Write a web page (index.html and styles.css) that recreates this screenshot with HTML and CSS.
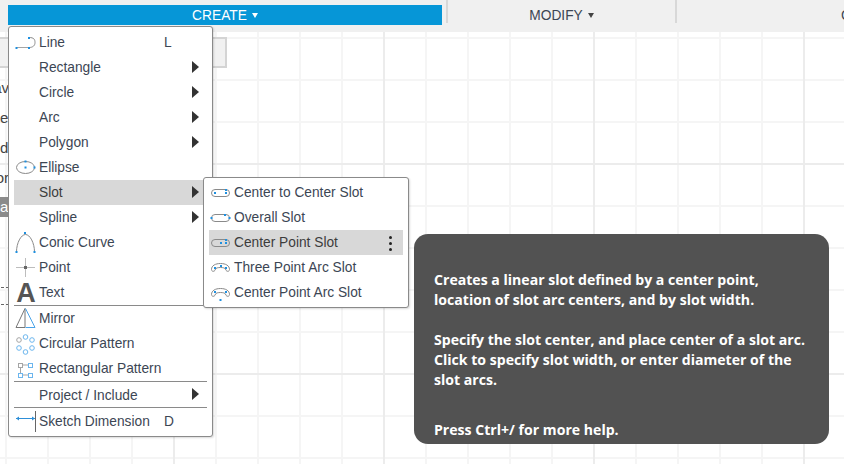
FILE: index.html
```html
<!DOCTYPE html>
<html lang="en">
<head>
<meta charset="utf-8">
<title>Sketch create menu</title>
<link rel="stylesheet" href="styles.css">
</head>
<body>
<svg class="defs" width="0" height="0" aria-hidden="true">
  <defs>
    <g id="slot"><rect x="1.500" y="3.500" width="18" height="7" rx="3.500" fill="#fff" stroke="#8a8a8a"/></g>
    <g id="arcslot"><path d="M1.500 8.500c0-4 4-6 9-6s9 2 9 6c0 2.500-3.500 2.500-4-.5-.4-1-2.500-1.500-5-1.500s-4.600.5-5 1.500c-.5 3-4 3-4 .5z" fill="#fff" stroke="#8a8a8a"/></g>
  </defs>
</svg>
<header class="toolbar">
  <div class="tab tab-active">CREATE<span class="caret"></span></div>
  <div class="tab tab-modify">MODIFY<span class="caret caret-dark"></span></div>
  <div class="tab tab-rest">C</div>
</header>
<main class="canvas">
  <div class="side-head"></div>
  <ul class="side-list">
    <li>av</li>
    <li>e</li>
    <li>d</li>
    <li>or</li>
    <li class="side-dark">a</li>
    <li class="side-box"><span class="box-mark"></span></li>
  </ul>
</main>

<nav class="menu main-menu">
  <div class="row">
    <svg class="ico" viewBox="0 0 22 18"><path d="M1 13.500h13" stroke="#a5a5a5" fill="none"/><path d="M14 3.500c5 0 6 2 6 5s-2 5-6 5" stroke="#8a8a8a" fill="none"/><rect x="0.500" y="13" width="2" height="2" fill="#1e90e0"/><rect x="13" y="13" width="2" height="2" fill="#1e90e0"/><rect x="13" y="3" width="2" height="2" fill="#1e90e0"/></svg>
    <span class="label">Line</span><span class="key">L</span>
  </div>
  <div class="row"><span class="ico"></span><span class="label">Rectangle</span><span class="arrow"></span></div>
  <div class="row"><span class="ico"></span><span class="label">Circle</span><span class="arrow"></span></div>
  <div class="row"><span class="ico"></span><span class="label">Arc</span><span class="arrow"></span></div>
  <div class="row"><span class="ico"></span><span class="label">Polygon</span><span class="arrow"></span></div>
  <div class="row">
    <svg class="ico" viewBox="0 0 22 18"><ellipse cx="10.500" cy="8.500" rx="9" ry="6" fill="none" stroke="#8a8a8a"/><rect x="9.500" y="7.500" width="2" height="2" fill="#1e90e0"/><rect x="9.500" y="1.500" width="2" height="2" fill="#1e90e0"/><rect x="18.500" y="7.500" width="2" height="2" fill="#1e90e0"/></svg>
    <span class="label">Ellipse</span>
  </div>
  <div class="row row-on"><span class="ico"></span><span class="label">Slot</span><span class="arrow"></span></div>
  <div class="row"><span class="ico"></span><span class="label">Spline</span><span class="arrow"></span></div>
  <div class="row">
    <svg class="ico ico-tall" viewBox="0 0 22 24"><path d="M1.500 21C1.500 12 6 3.500 10.500 3.500S19.500 12 19.500 21" fill="none" stroke="#8a8a8a"/><rect x="0.500" y="20" width="2" height="2" fill="#1e90e0"/><rect x="18.500" y="20" width="2" height="2" fill="#1e90e0"/><rect x="9" y="1" width="2" height="2" fill="#1e90e0"/></svg>
    <span class="label">Conic Curve</span>
  </div>
  <div class="row">
    <svg class="ico ico-tall" viewBox="0 0 22 24"><path d="M1 11.500h19M10.500 2v19" stroke="#bdbdbd" fill="none"/><rect x="9" y="10" width="3" height="3" fill="#666"/></svg>
    <span class="label">Point</span>
  </div>
  <div class="row">
    <span class="ico glyph-a">A</span>
    <span class="label">Text</span>
  </div>
  <div class="rule"></div>
  <div class="row">
    <svg class="ico ico-tall" viewBox="0 0 22 24"><path d="M10 1.500 1 20.500h9z" fill="none" stroke="#777"/><path d="M10.500 1.500 20 20.500h-9.500" fill="none" stroke="#4aa3e8"/></svg>
    <span class="label">Mirror</span>
  </div>
  <div class="row">
    <svg class="ico ico-tall" viewBox="0 0 22 24"><g fill="#fff" stroke="#6cb6ee"><circle cx="4" cy="8" r="2.300" stroke="#a5a5a5"/><circle cx="10.500" cy="5" r="2.300"/><circle cx="17" cy="8" r="2.300"/><circle cx="4" cy="16" r="2.300"/><circle cx="10.500" cy="20" r="2.300"/><circle cx="17" cy="16" r="2.300"/></g></svg>
    <span class="label">Circular Pattern</span>
  </div>
  <div class="row">
    <svg class="ico ico-tall" viewBox="0 0 22 24"><path d="M8 8h5M8 18h5M5.500 10v6" stroke="#a5a5a5" fill="none"/><g fill="#fff"><rect x="3.500" y="6.500" width="4" height="4" stroke="#a5a5a5"/><rect x="13.500" y="6.500" width="4" height="4" stroke="#6cb6ee"/><rect x="3.500" y="16.500" width="4" height="4" stroke="#6cb6ee"/><rect x="13.500" y="16.500" width="4" height="4" stroke="#6cb6ee"/></g></svg>
    <span class="label">Rectangular Pattern</span>
  </div>
  <div class="rule"></div>
  <div class="row row-low"><span class="ico"></span><span class="label">Project / Include</span><span class="arrow"></span></div>
  <div class="rule"></div>
  <div class="row row-low">
    <svg class="ico ico-tall" viewBox="0 0 22 24"><path d="M1 9.500h19" stroke="#2e8fd8" fill="none"/><path d="M1 9.500l3-2v4zM20 9.500l-3-2v4z" fill="#2e8fd8"/><path d="M20.500 2v21" stroke="#666" fill="none"/></svg>
    <span class="label">Sketch Dimension</span><span class="key">D</span>
  </div>
</nav>

<nav class="menu sub-menu">
  <div class="row">
    <svg class="ico" viewBox="0 -2 22 18"><use href="#slot"/><rect x="4" y="6" width="2" height="2" fill="#1e90e0"/><rect x="15" y="6" width="2" height="2" fill="#1e90e0"/><rect x="15" y="3" width="2" height="2" fill="#1e90e0"/></svg>
    <span class="label">Center to Center Slot</span>
  </div>
  <div class="row">
    <svg class="ico" viewBox="0 -2 22 18"><use href="#slot"/><rect x="0.500" y="6" width="2" height="2" fill="#1e90e0"/><rect x="14" y="3" width="2" height="2" fill="#1e90e0"/><rect x="18.500" y="6" width="2" height="2" fill="#1e90e0"/></svg>
    <span class="label">Overall Slot</span>
  </div>
  <div class="row row-on">
    <svg class="ico" viewBox="0 -2 22 18"><rect x="1.500" y="3.500" width="18" height="7" rx="3.500" fill="none" stroke="#8a8a8a"/><rect x="10" y="6" width="2" height="2" fill="#1e90e0"/><rect x="15" y="6" width="2" height="2" fill="#1e90e0"/><rect x="15" y="3" width="2" height="2" fill="#1e90e0"/></svg>
    <span class="label">Center Point Slot</span>
    <span class="dots"><i></i><i></i><i></i></span>
  </div>
  <div class="row">
    <svg class="ico" viewBox="0 -2 22 18"><use href="#arcslot"/><rect x="4" y="6" width="2" height="2" fill="#1e90e0"/><rect x="10" y="4" width="2" height="2" fill="#1e90e0"/><rect x="15" y="6" width="2" height="2" fill="#1e90e0"/></svg>
    <span class="label">Three Point Arc Slot</span>
  </div>
  <div class="row">
    <svg class="ico" viewBox="0 -2 22 18"><use href="#arcslot"/><rect x="4" y="5" width="2" height="2" fill="#1e90e0"/><rect x="15" y="5" width="2" height="2" fill="#1e90e0"/><rect x="9.500" y="13" width="2" height="2" fill="#1e90e0"/></svg>
    <span class="label">Center Point Arc Slot</span>
  </div>
</nav>

<aside class="tip">
  <p>Creates a linear slot defined by a center point,<br>location of slot arc centers, and by slot width.</p>
  <p>Specify the slot center, and place center of a slot arc.<br>Click to specify slot width, or enter diameter of the<br>slot arcs.</p>
  <p class="tip-last">Press Ctrl+/ for more help.</p>
</aside>
</body>
</html>
```
FILE: styles.css
```css
* { box-sizing: border-box; }
html, body { margin: 0; height: 100%; overflow: hidden; }
body {
  width: 844px;
  height: 464px;
  position: relative;
  background: #fff;
  font-family: "Liberation Sans", Arial, sans-serif;
  font-size: 13.75px;
  color: #3c3c3c;
}
.defs { position: absolute; }

.toolbar {
  display: flex;
  height: 32px;
  padding: 5px 0 0 8px;
  background: #f0f0f0;
}
.tab {
  flex: none;
  height: 20px;
  line-height: 21px;
  text-align: center;
  color: #3c4654;
}
.tab-active { width: 434px; background: #0696d7; color: #fff; margin-right: 4px; }
.tab-modify {
  width: 231px;
  height: 23px;
  margin-top: -5px;
  padding-top: 5px;
  border-left: 2px solid #d8d8d8;
  border-right: 2px solid #d8d8d8;
}
.tab-rest { flex: 1; text-align: left; padding-left: 164px; overflow: hidden; }
.caret {
  display: inline-block;
  margin-left: 5px;
  vertical-align: 2px;
  border-left: 3px solid transparent;
  border-right: 3px solid transparent;
  border-top: 5px solid #fff;
}
.caret-dark { border-top-color: #444; }

.canvas {
  height: 432px;
  padding-top: 5px;
  background-color: #fff;
  background-image:
    linear-gradient(90deg, #ececec 2px, transparent 2px),
    linear-gradient(#ececec 2px, transparent 2px),
    linear-gradient(90deg, #f5f5f5 2px, transparent 2px),
    linear-gradient(#f5f5f5 2px, transparent 2px);
  background-size: 210px 210px, 210px 210px, 42px 42px, 42px 42px;
  background-position: 593px 131px, 593px 131px, 467px 5px, 467px 5px;
}
.side-head {
  width: 227px;
  height: 31px;
  background: #f1f1f1;
  border-top: 2px solid #d4d4d4;
  border-right: 2px solid #d4d4d4;
  border-bottom: 2px solid #d4d4d4;
}
.side-list {
  list-style: none;
  margin: 9px 0 0;
  padding: 0;
  width: 9px;
  font-size: 15px;
  color: #444;
}
.side-list li {
  height: 30px;
  line-height: 22px;
  white-space: nowrap;
  direction: rtl;
  text-align: left;
}
.side-list .side-dark {
  height: 20px;
  line-height: 20px;
  background: #8b8b8b;
  color: #fff;
}
.side-list .side-box { height: 18px; margin-top: 70px; }
.box-mark {
  display: block;
  width: 8px;
  height: 18px;
  border: 1px dashed #666;
  border-left: 0;
}

.menu {
  position: absolute;
  background: #fff;
  border: 1px solid #8a8a8a;
  border-radius: 3px;
  box-shadow: 1px 1px 2px rgba(0,0,0,.15);
}
.main-menu { left: 8px; top: 26px; width: 205px; height: 411px; padding: 3px 5px 0; }
.sub-menu { left: 203px; top: 177px; width: 206px; height: 131px; padding: 2px 5px 0; }

.row {
  display: flex;
  align-items: center;
  height: 25px;
  position: relative;
}
.row-on { background: #d8d8d8; }
.main-menu .row-on { margin-right: -5px; }
.ico {
  flex: none;
  display: block;
  width: 22px;
  height: 18px;
  margin: 0 2px 0 1px;
}
.ico-tall { height: 24px; }
.label { white-space: nowrap; color: #3c4654; }
.row-low .label { margin-top: 2px; }
.row-on .label { color: #3c3c3c; }
.key { position: absolute; left: 150px; top: 5px; color: #3c4654; }
.row-low .key { top: 6px; }
.arrow {
  position: absolute;
  left: 178px;
  top: 6px;
  border-left: 7px solid #333;
  border-top: 6px solid transparent;
  border-bottom: 6px solid transparent;
}
.dots {
  position: absolute;
  left: 180px;
  top: 6px;
  display: flex;
  flex-direction: column;
  gap: 3px;
}
.dots i { width: 3px; height: 3px; border-radius: 50%; background: #222; }
.glyph-a {
  font-weight: 700;
  font-size: 27px;
  line-height: 18px;
  color: #555;
  text-align: center;
}
.rule { height: 1px; background: #8a8a8a; }

.tip {
  position: absolute;
  left: 414px;
  top: 234px;
  width: 415px;
  height: 210px;
  padding: 36px 20px 0;
  border-radius: 14px;
  background: #525252;
  color: #fff;
  font-family: "Open Sans", "Noto Sans", sans-serif;
  font-weight: 700;
  font-size: 14.1px;
  line-height: 20px;
}
.tip p { margin: 0 0 20px; white-space: nowrap; }
.tip .tip-last { margin-top: 30px; }
```
